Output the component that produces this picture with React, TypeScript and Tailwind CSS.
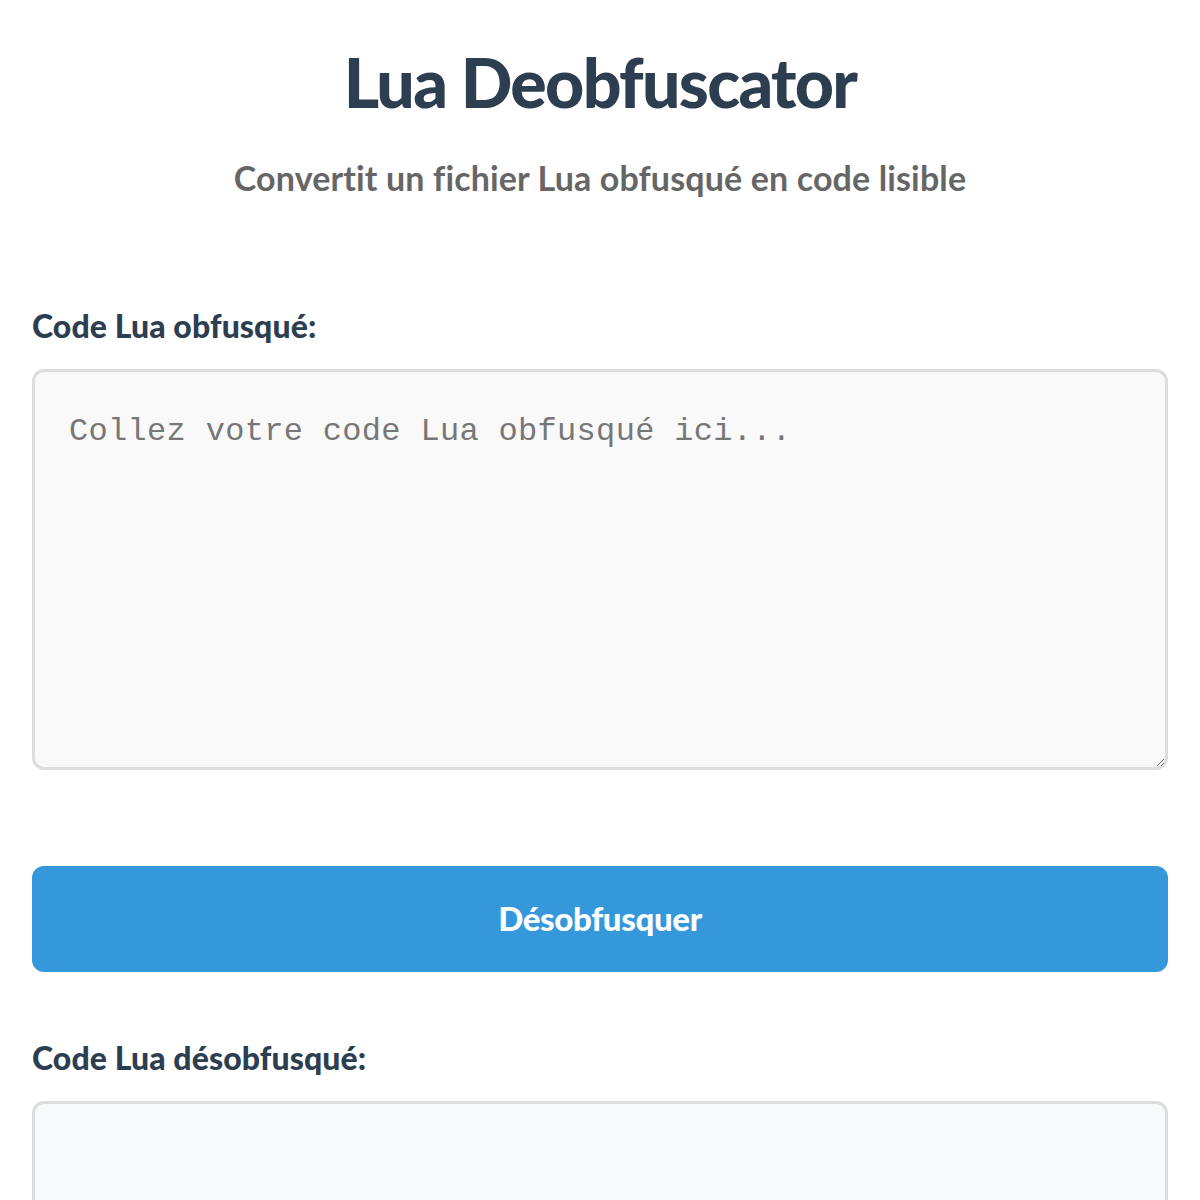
import React, { useState } from 'react';

const headFont = { fontFamily: 'Lato, "Noto Sans", sans-serif' };
const monoFont = { fontFamily: '"Liberation Mono", "DejaVu Sans Mono", monospace' };

export default function App() {
  const [input, setInput] = useState('');
  const [output] = useState('');

  return (
    <div className="min-h-screen bg-white px-8 pt-[44px]" style={headFont}>
      {/* Header */}
      <div className="text-center">
        <h1 className="text-[68px] leading-[76px] font-black tracking-[-0.025em] text-[#2c3e50]">
          Lua Deobfuscator
        </h1>
        <p className="mt-[38px] text-[34px] leading-[40px] font-bold tracking-[0.004em] text-[#666666]">
          Convertit un fichier Lua obfusqué en code lisible
        </p>
      </div>

      {/* Input */}
      <div className="mt-[110px]">
        <label className="block text-[32px] leading-[36px] font-black tracking-[0.003em] text-[#2c3e50]">
          Code Lua obfusqué:
        </label>
        <textarea
          value={input}
          onChange={(e) => setInput(e.target.value)}
          placeholder="Collez votre code Lua obfusqué ici..."
          className="mt-[25px] block w-full h-[401px] rounded-xl border-[3px] border-[#dddddd] bg-[#f9f9f9] px-[34px] py-[40px] text-[32px] leading-[40px] tracking-[0.01em] text-[#333] placeholder:text-[#777777] outline-none"
          style={monoFont}
        />
      </div>

      {/* Button */}
      <button className="mt-[96px] w-full h-[106px] rounded-xl bg-[#3498db] text-white text-[33px] font-black tracking-[-0.01em]">
        Désobfusquer
      </button>

      {/* Output */}
      <div className="mt-[68px]">
        <label className="block text-[32px] leading-[36px] font-black tracking-[0.003em] text-[#2c3e50]">
          Code Lua désobfusqué:
        </label>
        <textarea
          value={output}
          readOnly
          className="mt-[25px] block w-full h-[401px] rounded-xl border-[3px] border-[#dddddd] bg-[#f8f9fa] px-[34px] py-[40px] text-[32px] leading-[40px] text-[#333] outline-none"
          style={monoFont}
        />
      </div>
    </div>
  );
}
